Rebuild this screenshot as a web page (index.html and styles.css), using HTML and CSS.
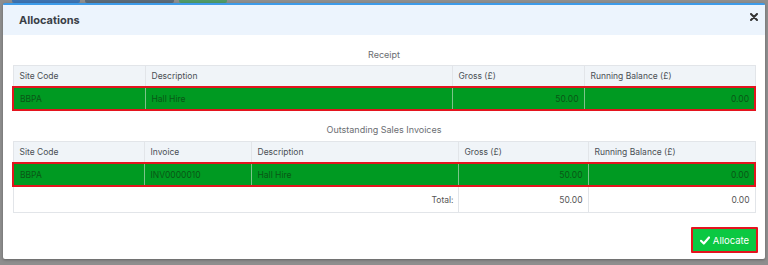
FILE: index.html
```html
<!DOCTYPE html>
<html>
<head>
<meta charset="utf-8">
<link rel="stylesheet" href="styles.css">
</head>
<body>
<div class="backdrop">
  <div class="behind">
    <span class="bb bb-blue"></span>
    <span class="bb bb-dark"></span>
    <span class="bb bb-green"></span>
  </div>
  <div class="modal">
    <div class="modal-header">
      <span class="modal-title">Allocations</span>
      <svg class="close" width="8" height="8" viewBox="0 0 8 8"><path d="M1 1 L7 7 M7 1 L1 7" stroke="#333" stroke-width="2" stroke-linecap="round"/></svg>
    </div>
    <div class="modal-body">
      <div class="section-title">Receipt</div>
      <table class="grid t1">
        <colgroup><col class="c1a"><col class="c1b"><col class="c1c"><col class="c1d"></colgroup>
        <thead>
          <tr><th>Site Code</th><th>Description</th><th>Gross (£)</th><th>Running Balance (£)</th></tr>
        </thead>
        <tbody>
          <tr class="sel"><td>BBPA</td><td>Hall Hire</td><td class="num">50.00</td><td class="num">0.00</td></tr>
        </tbody>
      </table>
      <div class="section-title second">Outstanding Sales Invoices</div>
      <table class="grid t2">
        <colgroup><col class="c2a"><col class="c2b"><col class="c2c"><col class="c2d"><col class="c2e"></colgroup>
        <thead>
          <tr><th>Site Code</th><th>Invoice</th><th>Description</th><th>Gross (£)</th><th>Running Balance (£)</th></tr>
        </thead>
        <tbody>
          <tr class="sel"><td>BBPA</td><td>INV0000010</td><td>Hall Hire</td><td class="num">50.00</td><td class="num">0.00</td></tr>
          <tr class="total"><td colspan="3" class="num">Total:</td><td class="num">50.00</td><td class="num">0.00</td></tr>
        </tbody>
      </table>
      <div class="footer">
        <button class="allocate">
          <svg width="10" height="9" viewBox="0 0 10 9"><path d="M1 4.8 L3.8 7.5 L9 1.5" stroke="#fff" stroke-width="2.2" fill="none" stroke-linecap="round" stroke-linejoin="round"/></svg>
          <span>Allocate</span>
        </button>
      </div>
    </div>
  </div>
</div>
</body>
</html>
```
FILE: styles.css
```css
html, body {
  margin: 0;
  padding: 0;
}
body {
  width: 768px;
  height: 265px;
  overflow: hidden;
  background: #8e8e8e;
  font-family: Inter, "Noto Sans", sans-serif;
}
.backdrop {
  display: flex;
  flex-direction: column;
}
.behind {
  height: 3px;
  display: flex;
  gap: 5px;
  padding-left: 12px;
}
.bb {
  display: block;
  height: 3px;
  border-radius: 0 0 2px 2px;
}
.bb-blue { width: 68px; background: #3d73b0; }
.bb-dark { width: 89px; background: #5b6a78; }
.bb-green { width: 48px; background: #4f9a68; }

.modal {
  margin-left: 3px;
  width: 762px;
  background: #fff;
  border-top: 2px solid #3d9be9;
  border-radius: 2px;
  box-shadow: 0 1px 3px rgba(0,0,0,0.3);
}
.modal-header {
  height: 30px;
  background: #ecf4fd;
  display: flex;
  align-items: center;
  justify-content: space-between;
  padding: 0 7px 0 16px;
}
.modal-title {
  font-size: 11px;
  font-weight: 700;
  color: #3a3f47;
}
.close {
  display: block;
  margin-top: -6px;
}
.modal-body {
  padding: 13px 9px 6px 9px;
}
.section-title {
  height: 14px;
  line-height: 14px;
  text-align: center;
  font-size: 9px;
  color: #6b6e72;
  margin-bottom: 3px;
}
.section-title.second {
  margin-top: 12px;
  margin-bottom: 4px;
}
.grid {
  width: 744px;
  border-collapse: collapse;
  table-layout: fixed;
  font-size: 8.5px;
}
.grid th, .grid td {
  border: 1px solid #e2e5e9;
  text-align: left;
  padding: 0 6px;
  font-weight: 400;
  white-space: nowrap;
}
.grid th {
  height: 20px;
  background: #f0f4f8;
  color: #4a4f55;
}
.grid td {
  color: #444;
}
.grid .num {
  text-align: right;
  padding-right: 5px;
}
.grid tr.sel td {
  height: 21px;
  background: #009a22;
  color: #0a5716;
  border-left: 1px solid #7cc48a;
  border-right: 1px solid #7cc48a;
}
.grid tr.sel {
  border: 2px solid #e4141e;
}
.grid tr.sel td:first-child { border-left: 2px solid #e4141e; }
.grid tr.sel td:last-child { border-right: 2px solid #e4141e; }
.grid tr.sel td { border-top: 2px solid #e4141e; border-bottom: 2px solid #e4141e; }
.grid tr.total td {
  height: 25px;
  color: #555;
  border-top: none;
}
.grid tr.total td:first-child {
  padding-right: 4px;
}

.c1a { width: 132px; }
.c1b { width: 307px; }
.c1c { width: 132px; }
.c1d { width: auto; }
.c2a { width: 131px; }
.c2b { width: 107px; }
.c2c { width: 207px; }
.c2d { width: 130px; }
.c2e { width: auto; }

.footer {
  display: flex;
  justify-content: flex-end;
  margin-top: 14px;
  margin-right: -2px;
}
.allocate {
  height: 26px;
  width: 67px;
  box-sizing: border-box;
  border: 2px solid #e4141e;
  background: #0bc842;
  box-shadow: inset 0 0 0 1px #0bc842;
  color: #fff;
  font-family: Inter, "Noto Sans", sans-serif;
  font-size: 9.5px;
  display: flex;
  align-items: center;
  justify-content: center;
  gap: 3px;
  padding: 0;
  border-radius: 1px;
}
.allocate svg { display: block; }
```
